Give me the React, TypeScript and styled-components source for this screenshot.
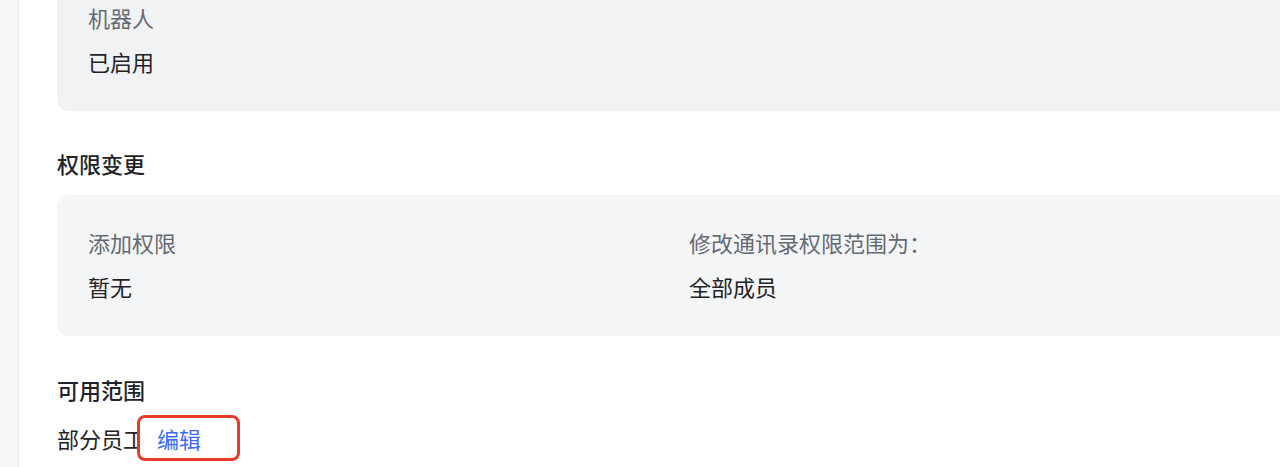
import React from "react";
import styled, { createGlobalStyle } from "styled-components";

const GlobalStyle = createGlobalStyle`
  html, body {
    margin: 0;
    padding: 0;
    background: #ffffff;
    font-family: "Noto Sans CJK SC", "Noto Sans", sans-serif;
  }
`;

const Page = styled.div`
  display: flex;
  width: 1280px;
  height: 467px;
  overflow: hidden;
`;

const Gutter = styled.div`
  flex: 0 0 18px;
  background: #f5f6f7;
  border-right: 1px solid #e6e7ea;
`;

const Main = styled.div`
  flex: 1;
  padding-left: 38px;
  margin-top: -30px;
  display: flex;
  flex-direction: column;
`;

const Card = styled.div<{ $tone?: "dark" | "light" }>`
  width: 1264px;
  box-sizing: border-box;
  padding: 32px 31px 35px;
  border-radius: 12px;
  background: ${({ $tone }) => ($tone === "dark" ? "#f1f2f4" : "#f4f5f7")};
  display: grid;
  grid-template-columns: 601px 1fr;
`;

const Field = styled.div`
  display: flex;
  flex-direction: column;
  gap: 14px;
`;

const Label = styled.div`
  font-size: 22px;
  line-height: 30px;
  color: #646a73;
`;

const Value = styled.div`
  font-size: 22px;
  line-height: 30px;
  color: #1f2329;
`;

const SectionTitle = styled.div<{ $top?: number }>`
  font-size: 22px;
  line-height: 30px;
  font-weight: 500;
  color: #1f2329;
  margin: ${({ $top }) => $top ?? 37}px 0 17px;
`;

const ScopeRow = styled.div`
  display: flex;
  align-items: center;
  margin-top: 2px;
  font-size: 22px;
  line-height: 30px;
  color: #1f2329;
`;

const EditLink = styled.span`
  position: relative;
  margin-left: 12px;
  color: #3d6cf5;
  cursor: pointer;
`;

const LinkText = styled.span`
  position: relative;
  z-index: 1;
`;

const Highlight = styled.span`
  position: absolute;
  left: -20px;
  top: -8px;
  width: 103px;
  height: 46px;
  box-sizing: border-box;
  background: #ffffff;
  border: 3px solid #e8392a;
  border-radius: 8px;
`;

export default function App() {
  return (
    <>
      <GlobalStyle />
      <Page>
        <Gutter />
        <Main>
          <Card $tone="dark">
            <Field>
              <Label>机器人</Label>
              <Value>已启用</Value>
            </Field>
          </Card>

          <SectionTitle>权限变更</SectionTitle>
          <Card $tone="light">
            <Field>
              <Label>添加权限</Label>
              <Value>暂无</Value>
            </Field>
            <Field>
              <Label>修改通讯录权限范围为：</Label>
              <Value>全部成员</Value>
            </Field>
          </Card>

          <SectionTitle $top={38}>可用范围</SectionTitle>
          <ScopeRow>
            部分员工
            <EditLink>
              <Highlight />
              <LinkText>编辑</LinkText>
            </EditLink>
          </ScopeRow>
        </Main>
      </Page>
    </>
  );
}
